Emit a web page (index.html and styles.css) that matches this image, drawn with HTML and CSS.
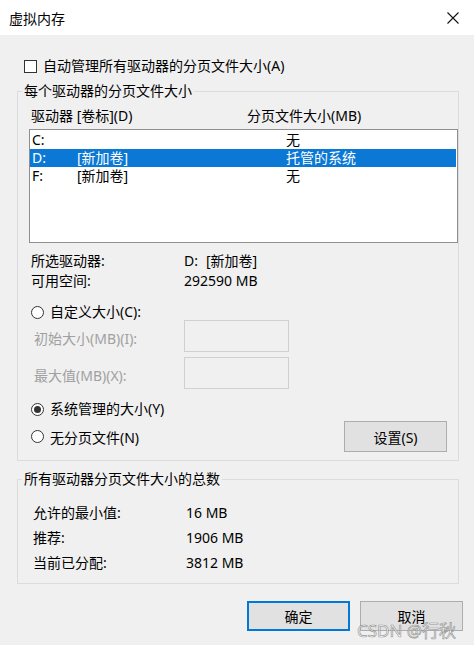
FILE: index.html
```html
<!DOCTYPE html>
<html lang="zh-CN">
<head>
<meta charset="utf-8">
<title>虚拟内存</title>
<link rel="stylesheet" href="styles.css">
</head>
<body>
<div class="dialog">
  <div class="titlebar">
    <span class="title">虚拟内存</span>
    <svg class="close" width="12" height="12" viewBox="0 0 12 12"><path d="M0.5 0.5 L11.5 11.5 M11.5 0.5 L0.5 11.5" stroke="#111" stroke-width="1.1" fill="none"/></svg>
  </div>
  <div class="content">
    <div class="check-row"><span class="checkbox"></span><span>自动管理所有驱动器的分页文件大小(A)</span></div>

    <fieldset class="group group-drives">
      <legend>每个驱动器的分页文件大小</legend>
      <div class="cols"><span class="col-a">驱动器 [卷标](D)</span><span>分页文件大小(MB)</span></div>
      <div class="listbox">
        <div class="item"><span class="c1">C:</span><span class="c2"></span><span>无</span></div>
        <div class="item selected"><span class="c1">D:</span><span class="c2">[新加卷]</span><span>托管的系统</span></div>
        <div class="item"><span class="c1">F:</span><span class="c2">[新加卷]</span><span>无</span></div>
      </div>
      <div class="info">
        <div class="info-row"><span class="info-label">所选驱动器:</span><span class="drv">D:</span><span>[新加卷]</span></div>
        <div class="info-row"><span class="info-label">可用空间:</span><span>292590 MB</span></div>
      </div>
      <div class="radio-row first"><span class="radio"></span><span>自定义大小(C):</span></div>
      <div class="size-row"><span class="size-label">初始大小(MB)(I):</span><span class="textbox"></span></div>
      <div class="size-row second"><span class="size-label">最大值(MB)(X):</span><span class="textbox"></span></div>
      <div class="radio-row sys"><span class="radio checked"></span><span>系统管理的大小(Y)</span></div>
      <div class="radio-row last"><span class="radio"></span><span>无分页文件(N)</span><button class="btn btn-set">设置(S)</button></div>
    </fieldset>

    <fieldset class="group group-total">
      <legend>所有驱动器分页文件大小的总数</legend>
      <div class="total-row"><span class="total-label">允许的最小值:</span><span>16 MB</span></div>
      <div class="total-row"><span class="total-label">推荐:</span><span>1906 MB</span></div>
      <div class="total-row"><span class="total-label">当前已分配:</span><span>3812 MB</span></div>
    </fieldset>

    <div class="actions">
      <button class="btn btn-ok">确定</button>
      <button class="btn btn-cancel">取消</button>
    </div>
    <div class="watermark">CSDN @行秋</div>
  </div>
</div>
</body>
</html>
```

FILE: styles.css
```css
* { box-sizing: border-box; }
html, body {
  margin: 0;
  padding: 0;
  background: #ffffff;
}
body {
  width: 474px;
  height: 647px;
  overflow: hidden;
  font-family: "Noto Sans", "Noto Sans CJK SC", sans-serif;
  font-size: 14px;
  color: #000;
}
.dialog {
  width: 474px;
  height: 647px;
  display: flex;
  flex-direction: column;
}
.titlebar {
  height: 35px;
  background: #ffffff;
  display: flex;
  align-items: center;
  justify-content: space-between;
  padding: 0 15px 0 9px;
}
.title {
  font-size: 14px;
  line-height: 18px;
  margin-top: 2px;
}
.close { display: block; margin-top: 1px; }
.content {
  position: relative;
  height: 610px;
  background: #f0f0f0;
  padding-top: 21px;
}
.check-row {
  height: 20px;
  display: flex;
  align-items: center;
  padding-left: 24px;
  line-height: 20px;
}
.checkbox {
  width: 13px;
  height: 13px;
  border: 1px solid #333;
  background: #fff;
  margin-right: 6px;
  flex: none;
}
.group {
  margin: 0 15px 0 17px;
  border: 1px solid #dcdcdc;
  padding: 0;
  min-width: 0;
}
.group legend {
  padding: 0 2px;
  margin-left: 4px;
  line-height: 18px;
  height: 18px;
}
.group-drives {
  margin-top: 6px;
  padding: 7px 0 8px 0;
}
.cols {
  height: 18px;
  line-height: 18px;
  display: flex;
  padding-left: 13px;
}
.col-a { width: 216px; }
.listbox {
  margin: 4px 0 0 11px;
  height: 114px;
  border: 1px solid #8f8f8f;
  background: #fff;
  padding: 1px 1px 1px 0;
}
.item {
  height: 18px;
  line-height: 18px;
  display: flex;
  padding-left: 2px;
}
.item.selected {
  background: #0a78d4;
  color: #fff;
}
.c1 { width: 45px; }
.c2 { width: 209px; }
.info { margin-top: 8px; }
.info-row {
  height: 20px;
  line-height: 20px;
  display: flex;
  padding-left: 13px;
}
.info-label { width: 153px; }
.drv { width: 22px; }
.radio-row {
  display: flex;
  align-items: center;
  padding-left: 13px;
}
.radio {
  width: 13px;
  height: 13px;
  border: 1px solid #333;
  border-radius: 50%;
  background: #fff;
  margin-right: 6px;
  display: flex;
  align-items: center;
  justify-content: center;
  flex: none;
}
.radio.checked::after {
  content: "";
  width: 7px;
  height: 7px;
  border-radius: 50%;
  background: #333;
}
.radio-row.first { margin-top: 13px; height: 16px; line-height: 16px; }
.size-row {
  height: 32px;
  display: flex;
  align-items: center;
  padding-left: 16px;
  color: #a0a0a0;
}
.size-row.second { margin-top: 5px; }
.size-label { width: 150px; padding-top: 4px; }
.textbox {
  width: 105px;
  height: 32px;
  border: 1px solid #d0d0d0;
  background: #f0f0f0;
}
.radio-row.sys { margin-top: 10px; height: 20px; line-height: 20px; }
.radio-row.last { margin-top: 2px; height: 31px; }
.btn {
  font-family: "Noto Sans", "Noto Sans CJK SC", sans-serif;
  font-size: 14px;
  color: #000;
  background: #e1e1e1;
  border: 1px solid #adadad;
  padding: 0;
  margin: 0;
}
.btn-set {
  width: 103px;
  height: 31px;
  margin-left: auto;
  margin-right: 11px;
}
.group-total {
  margin-top: 9px;
  padding: 12px 0 8px 0;
}
.total-row {
  height: 25px;
  line-height: 25px;
  display: flex;
  padding-left: 15px;
}
.total-label { width: 153px; }
.actions {
  margin-top: 17px;
  display: flex;
  justify-content: flex-end;
  gap: 10px;
  padding-right: 11px;
}
.actions .btn { height: 30px; width: 103px; }
.btn-ok { border: 2px solid #0078d7; }
.watermark {
  position: absolute;
  left: 357px;
  top: 588px;
  font-size: 17px;
  line-height: 16px;
  color: rgba(255, 255, 255, 0.75);
  -webkit-text-stroke: 0.7px rgba(110, 110, 110, 0.7);
  white-space: nowrap;
}
```
